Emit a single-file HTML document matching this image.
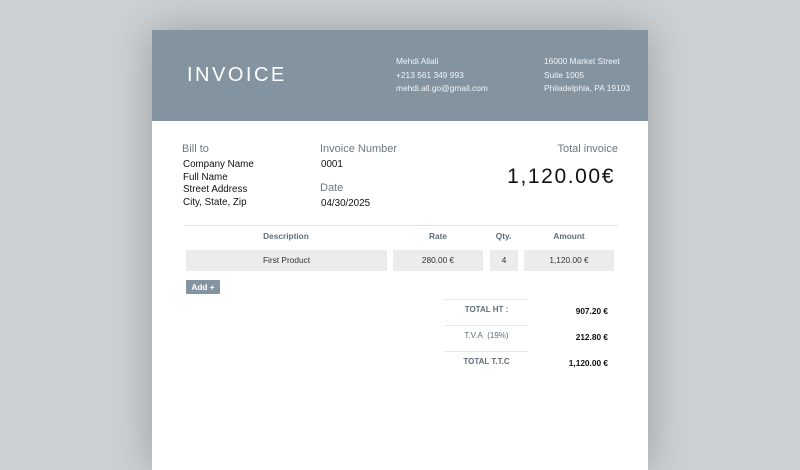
<!DOCTYPE html>
<html><head><meta charset="utf-8"><style>
*{margin:0;padding:0;box-sizing:border-box}
body{width:800px;height:450px;overflow:hidden;background:#cdd1d4;font-family:"Liberation Sans",sans-serif;position:relative}
.page{position:absolute;left:152px;top:30px;width:496px;height:440px;background:#fff;box-shadow:0 0 40px rgba(0,0,0,0.25)}
.hdr{position:absolute;left:0;top:0;width:496px;height:91px;background:#8394a0}
.a{position:absolute;white-space:nowrap}
.sm{font-size:8.4px;color:#f2f4f6;line-height:13.7px}
.lbl{font-size:11px;color:#6c7884}
.tx{font-size:9.8px;color:#111;line-height:12.6px}
.th{font-size:8.3px;font-weight:bold;color:#5f6e7c}
.cell{position:absolute;top:220px;height:21px;background:#ececec;font-size:8.3px;color:#333;text-align:center;line-height:21px}
.line{position:absolute;height:1px;background:#e3e6e9}
</style></head><body>
<div class="page">
<div class="hdr">
<div class="a" style="left:35px;top:34px;font-size:20px;letter-spacing:2.5px;color:#fff">INVOICE</div>
<div class="a sm" style="left:244px;top:25px">Mehdi Allali<br>+213 561 349 993<br>mehdi.all.go@gmail.com</div>
<div class="a sm" style="left:392px;top:25px">16000 Market Street<br>Suite 1005<br>Philadelphia, PA 19103</div>
</div>
<div class="a lbl" style="left:30px;top:113px">Bill to</div>
<div class="a tx" style="left:31px;top:129px">Company Name<br>Full Name<br>Street Address<br>City, State, Zip</div>
<div class="a lbl" style="left:168px;top:113px">Invoice Number</div>
<div class="a tx" style="left:169px;top:129px">0001</div>
<div class="a lbl" style="left:168px;top:152px">Date</div>
<div class="a tx" style="left:169px;top:168px">04/30/2025</div>
<div class="a lbl" style="right:30px;top:113px">Total invoice</div>
<div class="a" style="right:33px;top:135px;font-size:21px;letter-spacing:1.6px;color:#111">1,120.00€</div>
<div class="line" style="left:32px;top:195px;width:434px"></div>
<div class="a th" style="left:34px;width:200px;top:201px;text-align:center">Description</div>
<div class="a th" style="left:241px;width:90px;top:201px;text-align:center">Rate</div>
<div class="a th" style="left:338px;width:27px;top:201px;text-align:center">Qty.</div>
<div class="a th" style="left:372px;width:90px;top:201px;text-align:center">Amount</div>
<div class="cell" style="left:34px;width:201px">First Product</div>
<div class="cell" style="left:241px;width:90px">280.00 €</div>
<div class="cell" style="left:338px;width:28px">4</div>
<div class="cell" style="left:372px;width:90px">1,120.00 €</div>
<div class="a" style="left:34px;top:250px;width:34px;height:14px;background:#8394a0;color:#fff;font-size:8.3px;font-weight:bold;text-align:center;line-height:14px;border-radius:1px">Add +</div>
<div class="line" style="left:293px;top:269px;width:83px"></div>
<div class="line" style="left:293px;top:295px;width:83px"></div>
<div class="line" style="left:293px;top:321px;width:83px"></div>
<div class="a th" style="left:293px;width:83px;top:275px;text-align:center;font-size:8px">TOTAL HT :</div>
<div class="a th" style="left:293px;width:83px;top:301px;text-align:center;font-size:8px;font-weight:normal">T.V.A&nbsp; (19%)</div>
<div class="a th" style="left:293px;width:83px;top:327px;text-align:center;font-size:8px">TOTAL T.T.C</div>
<div class="a" style="right:40px;top:276px;font-size:8.3px;font-weight:bold;color:#111">907.20 €</div>
<div class="a" style="right:40px;top:302px;font-size:8.3px;font-weight:bold;color:#111">212.80 €</div>
<div class="a" style="right:40px;top:328px;font-size:8.3px;font-weight:bold;color:#111">1,120.00 €</div>
</div>
</body></html>
